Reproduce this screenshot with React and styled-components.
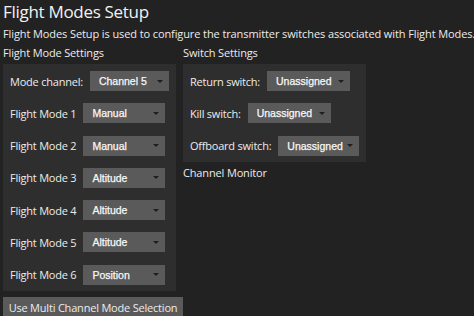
import styled, { createGlobalStyle } from 'styled-components';

const GlobalStyle = createGlobalStyle`
    html, body {
        margin: 0;
        padding: 0;
        background-color: #222222;
        overflow: hidden;
    }
`;

const modes = [
    { label: 'Flight Mode 1', value: 'Manual' },
    { label: 'Flight Mode 2', value: 'Manual' },
    { label: 'Flight Mode 3', value: 'Altitude' },
    { label: 'Flight Mode 4', value: 'Altitude' },
    { label: 'Flight Mode 5', value: 'Altitude' },
    { label: 'Flight Mode 6', value: 'Position' },
];

const switches = [
    { label: 'Return switch:', value: 'Unassigned' },
    { label: 'Kill switch:', value: 'Unassigned' },
    { label: 'Offboard switch:', value: 'Unassigned' },
];

const Combo = ({ value, width }) => (
    <ComboBox $width={width}>
        <span>{value}</span>
        <Arrow />
    </ComboBox>
);

const App = () => {
    return (
        <Page>
            <GlobalStyle />
            <Title>Flight Modes Setup</Title>
            <Description>
                Flight Modes Setup is used to configure the transmitter switches associated with Flight Modes.
            </Description>
            <Columns>
                <LeftColumn>
                    <SectionLabel>Flight Mode Settings</SectionLabel>
                    <Panel $width={173}>
                        <Row>
                            <Label>Mode channel:</Label>
                            <Combo value="Channel 5" width={82} />
                        </Row>
                        {modes.map((mode) => (
                            <Row key={mode.label}>
                                <Label>{mode.label}</Label>
                                <Combo value={mode.value} width={82} />
                            </Row>
                        ))}
                    </Panel>
                    <Button>Use Multi Channel Mode Selection</Button>
                </LeftColumn>
                <RightColumn>
                    <SectionLabel>Switch Settings</SectionLabel>
                    <Panel $width={183}>
                        {switches.map((sw) => (
                            <Row key={sw.label}>
                                <Label>{sw.label}</Label>
                                <Combo value={sw.value} width={83} />
                            </Row>
                        ))}
                    </Panel>
                    <SubHeading>Channel Monitor</SubHeading>
                </RightColumn>
            </Columns>
        </Page>
    );
};

const Page = styled.div`
    padding: 1px 3px;
    color: #ececec;
    font-family: "Open Sans", "Noto Sans", sans-serif;
`;

const Title = styled.div`
    font-size: 17px;
    line-height: 22px;
    letter-spacing: -0.3px;
    color: #f2f2f2;
`;

const Description = styled.div`
    margin-top: 3px;
    font-size: 11px;
    line-height: 16px;
    letter-spacing: -0.1px;
    white-space: nowrap;
`;

const Columns = styled.div`
    display: flex;
    margin-top: 3px;
`;

const LeftColumn = styled.div`
    width: 180px;
    display: flex;
    flex-direction: column;
    align-items: flex-start;
`;

const RightColumn = styled.div`
    display: flex;
    flex-direction: column;
    align-items: flex-start;
`;

const SectionLabel = styled.div`
    font-size: 11px;
    line-height: 16px;
    letter-spacing: -0.15px;
    margin-bottom: 3px;
`;

const Panel = styled.div`
    width: ${(props) => props.$width}px;
    box-sizing: border-box;
    background-color: #2e2e2e;
    padding: 7px 7px 6px 7px;
    display: flex;
    flex-direction: column;
    gap: 12.3px;
`;

const Row = styled.div`
    display: flex;
    align-items: center;
    gap: 7px;
    height: 20px;
`;

const Label = styled.span`
    font-size: 11px;
    letter-spacing: -0.22px;
    white-space: nowrap;
`;

const ComboBox = styled.div`
    width: ${(props) => props.$width}px;
    height: 20px;
    box-sizing: border-box;
    background-color: #5a5a5a;
    display: flex;
    align-items: center;
    justify-content: space-between;
    padding: 0 6px 0 9px;
    font-family: "Liberation Sans", Arial, sans-serif;
    font-size: 10.5px;
    color: #f8f8f8;
    -webkit-text-stroke: 0.25px #f8f8f8;
    white-space: nowrap;
`;

const Arrow = styled.span`
    width: 0;
    height: 0;
    border-left: 3px solid transparent;
    border-right: 3px solid transparent;
    border-top: 3px solid #1e1e1e;
`;

const Button = styled.div`
    margin-top: 6px;
    width: 180px;
    height: 22px;
    box-sizing: border-box;
    background-color: #5a5a5a;
    display: flex;
    align-items: center;
    justify-content: center;
    font-size: 11px;
    letter-spacing: -0.2px;
    white-space: nowrap;
`;

const SubHeading = styled.div`
    margin-top: 3px;
    font-size: 11px;
    line-height: 16px;
    letter-spacing: -0.15px;
`;

export default App;
